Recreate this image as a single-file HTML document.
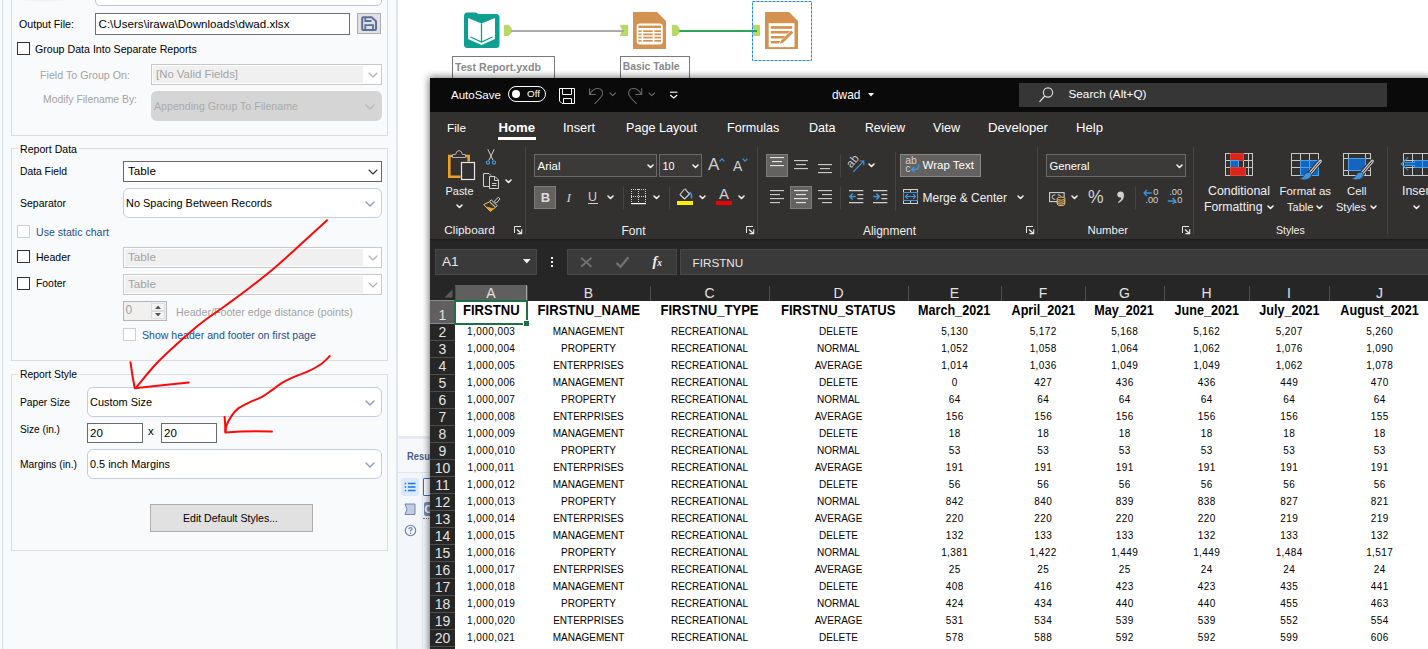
<!DOCTYPE html>
<html><head><meta charset="utf-8"><title>Excel output</title>
<style>
html,body{margin:0;padding:0}
body{width:1428px;height:649px;overflow:hidden;position:relative;background:#fff;font-family:"Liberation Sans",sans-serif}
.b{position:absolute;box-sizing:border-box}
.t{position:absolute;white-space:nowrap;margin:0;padding:0}
svg{overflow:visible}
</style></head>
<body>
<!-- left config panel -->
<div class="b" style="left:0px;top:0px;width:398px;height:649px;background:#f9fafc;"></div>
<div class="b" style="left:0px;top:0px;width:2px;height:649px;background:#fafbfd;"></div>
<div class="b" style="left:2px;top:0px;width:1px;height:649px;background:#d6dff0;"></div>
<div class="b" style="left:396px;top:0px;width:2px;height:649px;background:#dfe6f3;"></div>
<div class="b" style="left:11px;top:-20px;width:377px;height:156px;border:1px solid #dcdcdc;"></div>
<div class="b" style="left:95px;top:-25px;width:287px;height:31px;background:#fff;border:1px solid #b9c6e2;border-radius:5px;"></div>
<div class="b" style="left:14px;top:-6px;width:60px;height:8px;background:radial-gradient(ellipse at center, rgba(120,130,150,.18), rgba(120,130,150,0) 70%);"></div>
<div class="t" style="left:19.00px;top:16.00px;font-size:10.64px;line-height:16px;color:#000;">Output File:</div>
<div class="b" style="left:95px;top:13px;width:255px;height:22px;background:#fff;border:1px solid #6e6e6e;"></div>
<div class="t" style="left:98.50px;top:15.50px;font-size:11.61px;line-height:16px;color:#000;">C:\Users\irawa\Downloads\dwad.xlsx</div>
<div class="b" style="left:357px;top:13px;width:24px;height:21px;background:#e1e1e1;border:1px solid #adadad;"></div>
<svg class="b" style="left:361px;top:16px;" width="17" height="16" viewBox="0 0 17 16"><path d="M2.2 1.2 H10.6 L15 5.2 V13 Q15 14 14 14 H2.2 Q1.2 14 1.2 13 V2.2 Q1.2 1.2 2.2 1.2 Z" fill="none" stroke="#5b6f9c" stroke-width="2" stroke-linejoin="round"/><path d="M4.3 1.2 V5 H10.5" fill="none" stroke="#5b6f9c" stroke-width="1.8"/><path d="M4.3 14 V9.2 H12 V14" fill="none" stroke="#5b6f9c" stroke-width="1.8"/></svg>
<div class="b" style="left:17px;top:42px;width:13px;height:13px;background:#fff;border:1px solid #333;"></div>
<div class="t" style="left:35.00px;top:40.50px;font-size:10.64px;line-height:16px;color:#000;">Group Data Into Separate Reports</div>
<div class="t" style="left:40.00px;top:67.00px;font-size:10.68px;line-height:16px;color:#a3a3a3;">Field To Group On:</div>
<div class="b" style="left:151px;top:64px;width:231px;height:21px;background:#fff;border:1px solid #c8c8c8;"></div>
<div class="b" style="left:153px;top:66px;width:210px;height:17px;background:#f0f0f0;"></div>
<div class="t" style="left:156.00px;top:66.00px;font-size:11.38px;line-height:16px;color:#a3a3a3;">[No Valid Fields]</div>
<svg class="b" style="left:367.5px;top:72.0px;" width="10" height="6" viewBox="0 0 10 6"><path d="M1 1 L5.0 5 L9 1" fill="none" stroke="#b0b0b0" stroke-width="1.1" stroke-linecap="round" stroke-linejoin="round"/></svg>
<div class="t" style="left:43.00px;top:92.00px;font-size:10.38px;line-height:16px;color:#a3a3a3;">Modify Filename By:</div>
<div class="b" style="left:151px;top:91px;width:231px;height:30px;background:#d5d5d5;border-radius:6px;"></div>
<div class="t" style="left:154.00px;top:98.00px;font-size:10.63px;line-height:16px;color:#ababab;">Appending Group To Filename</div>
<svg class="b" style="left:365.0px;top:104.0px;" width="10" height="6" viewBox="0 0 10 6"><path d="M1 1 L5.0 5 L9 1" fill="none" stroke="#b9b9b9" stroke-width="1.3" stroke-linecap="round" stroke-linejoin="round"/></svg>
<div class="b" style="left:11px;top:148px;width:377px;height:213px;border:1px solid #dcdcdc;"></div>
<div class="b" style="left:18px;top:142px;width:61px;height:14px;background:#f9fafc;"></div>
<div class="t" style="left:20.00px;top:141.00px;font-size:10.57px;line-height:16px;color:#000;">Report Data</div>
<div class="t" style="left:20.00px;top:163.50px;font-size:10.31px;line-height:16px;color:#000;">Data Field</div>
<div class="b" style="left:123px;top:161px;width:259px;height:21px;background:#fff;border:1px solid #666;"></div>
<div class="t" style="left:128.00px;top:162.50px;font-size:11.71px;line-height:16px;color:#000;">Table</div>
<svg class="b" style="left:367.5px;top:169.0px;" width="10" height="6" viewBox="0 0 10 6"><path d="M1 1 L5.0 5 L9 1" fill="none" stroke="#333" stroke-width="1.1" stroke-linecap="round" stroke-linejoin="round"/></svg>
<div class="t" style="left:20.00px;top:195.50px;font-size:10.47px;line-height:16px;color:#000;">Separator</div>
<div class="b" style="left:123px;top:188px;width:259px;height:30px;background:#fff;border:1px solid #c2cde5;border-radius:6px;"></div>
<div class="t" style="left:126.00px;top:194.50px;font-size:10.94px;line-height:16px;color:#000;">No Spacing Between Records</div>
<svg class="b" style="left:365.0px;top:201.0px;" width="10" height="6" viewBox="0 0 10 6"><path d="M1 1 L5.0 5 L9 1" fill="none" stroke="#8c9bc0" stroke-width="1.4" stroke-linecap="round" stroke-linejoin="round"/></svg>
<div class="b" style="left:17px;top:225px;width:13px;height:13px;background:#fff;border:1px solid #cfcfcf;"></div>
<div class="t" style="left:36.00px;top:223.50px;font-size:10.59px;line-height:16px;color:#234f93;">Use static chart</div>
<div class="b" style="left:17px;top:250px;width:13px;height:13px;background:#fff;border:1px solid #333;"></div>
<div class="t" style="left:36.00px;top:249.00px;font-size:10.52px;line-height:16px;color:#000;">Header</div>
<div class="b" style="left:123px;top:247px;width:259px;height:21px;background:#fff;border:1px solid #c8c8c8;"></div>
<div class="b" style="left:125px;top:249px;width:238px;height:17px;background:#f0f0f0;"></div>
<div class="t" style="left:128.00px;top:249.00px;font-size:11.71px;line-height:16px;color:#a3a3a3;">Table</div>
<svg class="b" style="left:367.5px;top:255.0px;" width="10" height="6" viewBox="0 0 10 6"><path d="M1 1 L5.0 5 L9 1" fill="none" stroke="#b0b0b0" stroke-width="1.1" stroke-linecap="round" stroke-linejoin="round"/></svg>
<div class="b" style="left:17px;top:277px;width:13px;height:13px;background:#fff;border:1px solid #333;"></div>
<div class="t" style="left:36.00px;top:276.00px;font-size:10.38px;line-height:16px;color:#000;">Footer</div>
<div class="b" style="left:123px;top:274px;width:259px;height:21px;background:#fff;border:1px solid #c8c8c8;"></div>
<div class="b" style="left:125px;top:276px;width:238px;height:17px;background:#f0f0f0;"></div>
<div class="t" style="left:128.00px;top:276.00px;font-size:11.71px;line-height:16px;color:#a3a3a3;">Table</div>
<svg class="b" style="left:367.5px;top:282.0px;" width="10" height="6" viewBox="0 0 10 6"><path d="M1 1 L5.0 5 L9 1" fill="none" stroke="#b0b0b0" stroke-width="1.1" stroke-linecap="round" stroke-linejoin="round"/></svg>
<div class="b" style="left:123px;top:301px;width:44px;height:20px;background:#f0f0f0;border:1px solid #b5b5b5;"></div>
<div class="t" style="left:125.50px;top:302.00px;font-size:12.00px;line-height:16px;color:#a3a3a3;">0</div>
<div class="b" style="left:151px;top:303px;width:14px;height:8px;background:#f4f4f4;border:1px solid #dcdcdc;"></div>
<div class="b" style="left:151px;top:311px;width:14px;height:8px;background:#f4f4f4;border:1px solid #dcdcdc;"></div>
<svg class="b" style="left:154px;top:304px;" width="8" height="6" viewBox="0 0 8 6"><path d="M1 5 L4 1.5 L7 5 Z" fill="#555"/></svg>
<svg class="b" style="left:154px;top:312px;" width="8" height="6" viewBox="0 0 8 6"><path d="M1 1 L4 4.5 L7 1 Z" fill="#555"/></svg>
<div class="t" style="left:176.00px;top:304.00px;font-size:10.68px;line-height:16px;color:#a3a3a3;">Header/Footer edge distance (points)</div>
<div class="b" style="left:123px;top:328px;width:13px;height:13px;background:#fff;border:1px solid #cfcfcf;"></div>
<div class="t" style="left:142.00px;top:327.00px;font-size:10.57px;line-height:16px;color:#234f93;">Show header and footer on first page</div>
<div class="b" style="left:11px;top:374px;width:377px;height:177px;border:1px solid #dcdcdc;"></div>
<div class="b" style="left:18px;top:368px;width:61px;height:14px;background:#f9fafc;"></div>
<div class="t" style="left:20.00px;top:367.00px;font-size:10.36px;line-height:16px;color:#000;">Report Style</div>
<div class="t" style="left:20.00px;top:395.00px;font-size:10.22px;line-height:16px;color:#000;">Paper Size</div>
<div class="b" style="left:87px;top:387px;width:295px;height:30px;background:#fff;border:1px solid #c2cde5;border-radius:6px;"></div>
<div class="t" style="left:90.00px;top:394.00px;font-size:10.94px;line-height:16px;color:#000;">Custom Size</div>
<svg class="b" style="left:365.0px;top:400.0px;" width="10" height="6" viewBox="0 0 10 6"><path d="M1 1 L5.0 5 L9 1" fill="none" stroke="#8c9bc0" stroke-width="1.4" stroke-linecap="round" stroke-linejoin="round"/></svg>
<div class="t" style="left:20.00px;top:422.00px;font-size:10.14px;line-height:16px;color:#000;">Size (in.)</div>
<div class="b" style="left:87px;top:423px;width:56px;height:20px;background:#fff;border:1px solid #6a6a6a;"></div>
<div class="t" style="left:90.00px;top:425.00px;font-size:11.50px;line-height:16px;color:#000;">20</div>
<div class="t" style="left:148.00px;top:423.00px;font-size:11.50px;line-height:16px;color:#000;">x</div>
<div class="b" style="left:161px;top:423px;width:56px;height:20px;background:#fff;border:1px solid #6a6a6a;"></div>
<div class="t" style="left:164.00px;top:425.00px;font-size:11.50px;line-height:16px;color:#000;">20</div>
<div class="t" style="left:20.00px;top:457.00px;font-size:10.26px;line-height:16px;color:#000;">Margins (in.)</div>
<div class="b" style="left:87px;top:449px;width:295px;height:30px;background:#fff;border:1px solid #c2cde5;border-radius:6px;"></div>
<div class="t" style="left:90.00px;top:456.00px;font-size:10.90px;line-height:16px;color:#000;">0.5 inch Margins</div>
<svg class="b" style="left:365.0px;top:462.0px;" width="10" height="6" viewBox="0 0 10 6"><path d="M1 1 L5.0 5 L9 1" fill="none" stroke="#8c9bc0" stroke-width="1.4" stroke-linecap="round" stroke-linejoin="round"/></svg>
<div class="b" style="left:150px;top:504px;width:163px;height:28px;background:#e1e1e1;border:1px solid #adadad;"></div>
<div class="t" style="left:183.00px;top:510.00px;font-size:10.55px;line-height:16px;color:#000;">Edit Default Styles...</div>
<!-- canvas -->
<div class="b" style="left:398px;top:436px;width:40px;height:3px;background:#e6ecf6;"></div>
<div class="b" style="left:398px;top:439px;width:40px;height:210px;background:#f3f6fb;"></div>
<div class="b" style="left:398px;top:439px;width:40px;height:34px;background:#f6f8fc;"></div>
<div class="b" style="left:398px;top:472px;width:40px;height:1px;background:#dfe6f2;"></div>
<div class="t" style="left:407.30px;top:448.30px;font-size:11.40px;line-height:16px;color:#4a5e8c;font-weight:700;transform:scaleX(0.82);transform-origin:0 50%;">Resu</div>
<div class="b" style="left:401px;top:478px;width:18px;height:18px;background:#dbe9fb;border-radius:3px;"></div>
<svg class="b" style="left:404px;top:481px;" width="12" height="12" viewBox="0 0 12 12"><g stroke="#1a73e8" stroke-width="1.4" fill="none"><path d="M4 2.5H11.5M4 6H11.5M4 9.5H11.5"/></g><g fill="#1a73e8"><rect x="0.7" y="1.8" width="1.5" height="1.5"/><rect x="0.7" y="5.3" width="1.5" height="1.5"/><rect x="0.7" y="8.8" width="1.5" height="1.5"/></g></svg>
<svg class="b" style="left:404px;top:503px;" width="12" height="13" viewBox="0 0 12 13"><path d="M1 1 H11 V11.5 H1 L3 6.2 Z" fill="#c3cde2" stroke="#7083ad" stroke-width="1"/></svg>
<svg class="b" style="left:404px;top:524px;" width="13" height="13" viewBox="0 0 13 13"><circle cx="6.5" cy="6.5" r="5.2" fill="none" stroke="#6b7fa8" stroke-width="1.1"/><path d="M4.8 5.2 Q4.9 3.6 6.5 3.6 Q8.1 3.6 8.1 5 Q8.1 5.9 6.5 6.6 V7.6" fill="none" stroke="#6b7fa8" stroke-width="1.1"/><circle cx="6.5" cy="9.2" r="0.7" fill="#6b7fa8"/></svg>
<div class="b" style="left:422px;top:473px;width:1px;height:176px;background:#e3e9f3;"></div>
<div class="b" style="left:423px;top:478px;width:10px;height:18px;background:#fff;border:1px solid #2a73d8;border-radius:1px;"></div>
<div class="b" style="left:424px;top:502px;width:8px;height:14px;background:#7d8db0;border-radius:2px;"></div>
<div class="t" style="left:424.50px;top:501.00px;font-size:11.00px;line-height:16px;color:#fff;font-weight:700;">C</div>
<div class="b" style="left:423px;top:518px;width:8px;height:1px;border-top:1px dotted #777;"></div>
<div class="b" style="left:509px;top:30px;width:112px;height:2px;background:#ababab;"></div>
<div class="b" style="left:677px;top:30px;width:79.5px;height:2px;background:#2ea651;"></div>
<svg class="b" style="left:463px;top:11px;" width="38" height="39" viewBox="0 0 38 39"><path d="M1 5 Q1 1.5 4.5 1.5 H12.5 Q14.5 1.5 15 3 H33 Q36.5 3 36.5 6.5 V33.5 Q36.5 37 33 37 H4.5 Q1 37 1 33.5 Z" fill="#0d9f8f"/><path d="M5 7 L18.5 12.5 L32 7 V28 L18.5 34 L5 28 Z" fill="#fff"/><path d="M18.5 12.5 V31" stroke="#0d9f8f" stroke-width="1.3" fill="none"/><path d="M7.5 26 L18.5 31 L29.5 26" stroke="#0d9f8f" stroke-width="1.3" fill="none"/></svg>
<svg class="b" style="left:503.7px;top:25px;" width="8" height="11" viewBox="0 0 8 11"><path d="M0.3 0.3 H4.6 L7.2 3.4 V7.4 L4.6 10.5 H0.3 Z" fill="#b9da60" stroke="#a3c653" stroke-width="0.6"/></svg>
<svg class="b" style="left:620.2px;top:25px;" width="8" height="11" viewBox="0 0 8 11"><path d="M0.3 0.3 H7.7 V10.5 H0.3 L2.6 5.4 Z" fill="#b9da60" stroke="#a3c653" stroke-width="0.6"/></svg>
<svg class="b" style="left:671.7px;top:25px;" width="8" height="11" viewBox="0 0 8 11"><path d="M0.3 0.3 H4.6 L7.2 3.4 V7.4 L4.6 10.5 H0.3 Z" fill="#b9da60" stroke="#a3c653" stroke-width="0.6"/></svg>
<svg class="b" style="left:752.3px;top:25px;" width="8" height="11" viewBox="0 0 8 11"><path d="M0.3 0.3 H7.7 V10.5 H0.3 L2.6 5.4 Z" fill="#b9da60" stroke="#a3c653" stroke-width="0.6"/></svg>
<div class="b" style="left:620px;top:30px;width:3.5px;height:2px;background:#ababab;"></div>
<div class="b" style="left:752px;top:30px;width:4.5px;height:2px;background:#2ea651;"></div>
<svg class="b" style="left:633px;top:12px;" width="33" height="37" viewBox="0 0 33 37"><path d="M0 0 H24 L33 9 V37 H0 Z" fill="#d3924f"/><rect x="3.7" y="11.6" width="26.1" height="20.8" rx="3" fill="#fff"/><g fill="#d3924f"><rect x="5.4" y="13.6" width="22.6" height="2.4"/><rect x="5.4" y="18.3" width="3.1" height="1.7"/><rect x="10.2" y="18.3" width="9.5" height="1.7"/><rect x="21.4" y="18.3" width="6.6" height="1.7"/><rect x="5.4" y="21.5" width="3.1" height="1.7"/><rect x="10.2" y="21.5" width="9.5" height="1.7"/><rect x="21.4" y="21.5" width="6.6" height="1.7"/><rect x="5.4" y="24.7" width="3.1" height="1.7"/><rect x="10.2" y="24.7" width="9.5" height="1.7"/><rect x="21.4" y="24.7" width="6.6" height="1.7"/><rect x="5.4" y="28" width="3.1" height="1.7"/><rect x="10.2" y="28" width="9.5" height="1.7"/><rect x="21.4" y="28" width="6.6" height="1.7"/></g></svg>
<svg class="b" style="left:765px;top:12px;" width="33" height="37" viewBox="0 0 33 37"><path d="M0 0 H24 L33 9 V37 H0 Z" fill="#d3924f"/><rect x="3.7" y="11.2" width="25.8" height="23.9" fill="#fff"/><g fill="#d3924f"><rect x="5.8" y="14.1" width="21.4" height="2.7"/><path d="M5.8 19 H25 L22.5 21.6 H5.8 Z"/><path d="M5.8 24 H20.2 L17.8 26.6 H5.8 Z"/><path d="M5.8 28.9 H15.6 L13.6 31.5 H5.8 Z"/><path d="M26.2 18.6 L28.3 20.6 L18.4 30.6 L14.6 31.9 L16.2 28.4 Z"/></g></svg>
<svg class="b" style="left:752px;top:1px;" width="60" height="60" viewBox="0 0 60 60"><rect x="0.5" y="0.5" width="59" height="59" fill="none" stroke="#2585e6" stroke-width="1" stroke-dasharray="3 1"/></svg>
<div class="b" style="left:452px;top:56px;width:103px;height:24px;background:#fff;border:1px solid #7a7a7a;"></div>
<div class="t" style="left:455.00px;top:59.20px;font-size:10.63px;line-height:16px;color:#8a8a8a;font-weight:700;">Test Report.yxdb</div>
<div class="b" style="left:620px;top:56px;width:70px;height:24px;background:#fff;border:1px solid #7a7a7a;"></div>
<div class="t" style="left:622.70px;top:59.20px;font-size:10.39px;line-height:16px;color:#8a8a8a;font-weight:700;">Basic Table</div>
<!-- excel ribbon -->
<div class="b" style="left:430px;top:78px;width:1000px;height:575px;background:#fff;box-shadow:0 0 7px 1px rgba(0,0,0,.55);"></div>
<div class="b" style="left:430px;top:78px;width:998px;height:34px;background:#0a0a0a;"></div>
<div class="b" style="left:430px;top:112px;width:998px;height:127px;background:#323130;"></div>
<div class="b" style="left:430px;top:239px;width:998px;height:46px;background:#262626;"></div>
<div class="b" style="left:430px;top:239px;width:998px;height:2px;background:linear-gradient(#1a1a1a,#262626);"></div>
<div class="t" style="left:451.00px;top:87.00px;font-size:11.53px;line-height:16px;color:#fff;">AutoSave</div>
<div class="b" style="left:508px;top:86px;width:38px;height:16px;border:1px solid #fff;border-radius:8px;"></div>
<div class="b" style="left:512px;top:90px;width:8px;height:8px;background:#fff;border-radius:4px;"></div>
<div class="t" style="left:527.00px;top:86.00px;font-size:9.88px;line-height:16px;color:#fff;">Off</div>
<svg class="b" style="left:559px;top:88px;" width="17" height="17" viewBox="0 0 17 17"><path d="M0.5 0.5 H15.5 V15.5 H3 L0.5 13 Z" fill="none" stroke="#fff" stroke-width="1"/><path d="M3.5 0.5 V6.5 H12.5 V0.5" fill="none" stroke="#fff" stroke-width="1"/><path d="M4.5 15.5 V10.5 H12.5 V15.5" fill="none" stroke="#fff" stroke-width="1"/></svg>
<svg class="b" style="left:588px;top:87px;" width="16" height="18" viewBox="0 0 16 18"><path d="M1.5 1.2 V7.5 H7.8" fill="none" stroke="#6a6a6a" stroke-width="1.1"/><path d="M2 7 C4 3.2 7 1.5 10 1.5 C13 1.5 15 4 14.5 7 C14 10 10.5 13 6.5 16.8" fill="none" stroke="#6a6a6a" stroke-width="1.1"/></svg>
<svg class="b" style="left:608.75px;top:92.0px;" width="7.5" height="4.6" viewBox="0 0 7.5 4.6"><path d="M1 1 L3.75 3.6 L6.5 1" fill="none" stroke="#6a6a6a" stroke-width="1.1" stroke-linecap="round" stroke-linejoin="round"/></svg>
<svg class="b" style="left:627px;top:87px;" width="16" height="18" viewBox="0 0 16 18"><path d="M14.7 1.2 V7.5 H8.4" fill="none" stroke="#6a6a6a" stroke-width="1.1"/><path d="M14.2 7 C12.2 3.2 9.2 1.5 6.2 1.5 C3.2 1.5 1.2 4 1.7 7 C2.2 10 5.7 13 9.7 16.8" fill="none" stroke="#6a6a6a" stroke-width="1.1"/></svg>
<svg class="b" style="left:647.85px;top:92.0px;" width="7.5" height="4.6" viewBox="0 0 7.5 4.6"><path d="M1 1 L3.75 3.6 L6.5 1" fill="none" stroke="#6a6a6a" stroke-width="1.1" stroke-linecap="round" stroke-linejoin="round"/></svg>
<svg class="b" style="left:669px;top:91px;" width="10" height="8" viewBox="0 0 10 8"><path d="M1 1.2 H8.4" stroke="#fff" stroke-width="1.1"/><path d="M1.2 4 L4.7 7 L8.2 4" fill="none" stroke="#fff" stroke-width="1.2"/></svg>
<div class="t" style="left:832.00px;top:86.50px;font-size:11.92px;line-height:16px;color:#fff;">dwad</div>
<svg class="b" style="left:868px;top:93px;" width="6" height="4" viewBox="0 0 6 4"><path d="M0 0 H6 L3 3.5 Z" fill="#fff"/></svg>
<div class="b" style="left:1019px;top:83px;width:368px;height:24px;background:#363636;"></div>
<svg class="b" style="left:1038px;top:86px;" width="16" height="18" viewBox="0 0 16 18"><circle cx="10" cy="6.5" r="4.6" fill="none" stroke="#e0e0e0" stroke-width="1.1"/><path d="M6.8 10 L1.5 15.8" stroke="#e0e0e0" stroke-width="1.2"/></svg>
<div class="t" style="left:1068.50px;top:86.00px;font-size:11.74px;line-height:16px;color:#fff;">Search (Alt+Q)</div>
<div class="t" style="left:447.00px;top:118.50px;font-size:11.79px;line-height:18px;color:#fff;">File</div>
<div class="t" style="left:563.00px;top:118.50px;font-size:12.79px;line-height:18px;color:#fff;">Insert</div>
<div class="t" style="left:626.00px;top:118.50px;font-size:12.64px;line-height:18px;color:#fff;">Page Layout</div>
<div class="t" style="left:727.00px;top:118.50px;font-size:12.57px;line-height:18px;color:#fff;">Formulas</div>
<div class="t" style="left:809.00px;top:118.50px;font-size:12.59px;line-height:18px;color:#fff;">Data</div>
<div class="t" style="left:865.00px;top:118.50px;font-size:12.20px;line-height:18px;color:#fff;">Review</div>
<div class="t" style="left:933.00px;top:118.50px;font-size:12.56px;line-height:18px;color:#fff;">View</div>
<div class="t" style="left:988.00px;top:118.50px;font-size:13.16px;line-height:18px;color:#fff;">Developer</div>
<div class="t" style="left:1076.00px;top:118.50px;font-size:13.13px;line-height:18px;color:#fff;">Help</div>
<div class="t" style="left:498.50px;top:118.50px;font-size:13.14px;line-height:18px;color:#fff;font-weight:700;">Home</div>
<div class="b" style="left:498px;top:137px;width:38px;height:3px;background:#fff;"></div>
<div class="b" style="left:525px;top:147px;width:1px;height:87px;background:#484644;"></div>
<div class="b" style="left:757px;top:147px;width:1px;height:87px;background:#484644;"></div>
<div class="b" style="left:1037px;top:147px;width:1px;height:87px;background:#484644;"></div>
<div class="b" style="left:1193px;top:147px;width:1px;height:87px;background:#484644;"></div>
<div class="b" style="left:1387px;top:147px;width:1px;height:87px;background:#484644;"></div>
<div class="b" style="left:623px;top:187px;width:1px;height:22px;background:#484644;"></div>
<div class="b" style="left:669px;top:187px;width:1px;height:22px;background:#484644;"></div>
<div class="b" style="left:840px;top:155px;width:1px;height:22px;background:#484644;"></div>
<div class="b" style="left:840px;top:187px;width:1px;height:22px;background:#484644;"></div>
<div class="b" style="left:895px;top:152px;width:1px;height:59px;background:#484644;"></div>
<div class="b" style="left:1135px;top:187px;width:1px;height:22px;background:#484644;"></div>
<svg class="b" style="left:447px;top:149px;" width="29" height="31" viewBox="0 0 29 31"><path d="M6 7 H2.3 V27.7 H13.5" fill="none" stroke="#eba02e" stroke-width="2.6"/><path d="M18 7 H21.7 V12.5" fill="none" stroke="#eba02e" stroke-width="2.6"/><path d="M5.5 8.5 V5.5 H8.6 Q9.2 1.6 12 1.6 Q14.8 1.6 15.4 5.5 H18.5 V8.5 Z" fill="#323130" stroke="#b0b0b0" stroke-width="1"/><rect x="14.5" y="13.5" width="13" height="17" fill="#323130" stroke="#e6e6e6" stroke-width="1.2"/></svg>
<div class="t" style="left:445.50px;top:183.00px;font-size:10.95px;line-height:16px;color:#f0f0f0;">Paste</div>
<svg class="b" style="left:455.5px;top:203.75px;" width="7" height="4.5" viewBox="0 0 7 4.5"><path d="M1 1 L3.5 3.5 L6 1" fill="none" stroke="#f0f0f0" stroke-width="1.6" stroke-linecap="round" stroke-linejoin="round"/></svg>
<svg class="b" style="left:485px;top:148px;" width="12" height="18" viewBox="0 0 12 18"><path d="M2.8 1.2 L8.2 12.6 M9.2 1.2 L3.8 12.6" stroke="#d0d0d0" stroke-width="1" fill="none"/><circle cx="3" cy="14.6" r="1.6" fill="none" stroke="#3a96dd" stroke-width="1.2"/><circle cx="9" cy="14.6" r="1.6" fill="none" stroke="#3a96dd" stroke-width="1.2"/></svg>
<svg class="b" style="left:482px;top:172px;" width="18" height="18" viewBox="0 0 18 18"><path d="M7.5 14.5 H1.5 V1.5 H7 L9.3 3.8" fill="none" stroke="#d0d0d0" stroke-width="1"/><path d="M7.5 4.5 H13 L16.5 8 V16.5 H7.5 Z" fill="#323130" stroke="#d0d0d0" stroke-width="1"/><path d="M12.5 4.8 V8.5 H16.2" fill="none" stroke="#d0d0d0" stroke-width="1"/><path d="M10 11.5 H14.5 M10 13.5 H14.5" stroke="#d0d0d0" stroke-width="1"/></svg>
<svg class="b" style="left:505.0px;top:178.75px;" width="7" height="4.5" viewBox="0 0 7 4.5"><path d="M1 1 L3.5 3.5 L6 1" fill="none" stroke="#f0f0f0" stroke-width="1.6" stroke-linecap="round" stroke-linejoin="round"/></svg>
<svg class="b" style="left:483px;top:196px;" width="18" height="17" viewBox="0 0 18 17"><path d="M15.2 1.2 L17 3 L13 7.4 L11.2 5.6 Z" fill="#323130" stroke="#d0d0d0" stroke-width="1" stroke-linejoin="round"/><path d="M8.2 3.8 L14.2 9.6 L12.6 11.2 L6.6 5.4 Z" fill="#323130" stroke="#d0d0d0" stroke-width="1"/><path d="M6.4 5.8 L12.3 11.5 L7.3 15.4 L0.8 8.6 Z" fill="#323130" stroke="#f2c469" stroke-width="1" stroke-linejoin="round"/><path d="M3.4 10.6 L10.8 12.6 L7.3 15.4 Z" fill="#eba02e"/></svg>
<div class="t" style="left:444.30px;top:222.00px;font-size:11.80px;line-height:16px;color:#f0f0f0;">Clipboard</div>
<svg class="b" style="left:514px;top:226px;" width="9" height="9" viewBox="0 0 9 9"><path d="M0.5 7 V0.5 H7" fill="none" stroke="#e8e8e8" stroke-width="1"/><path d="M3 3.4 L7.4 7.4" fill="none" stroke="#e8e8e8" stroke-width="1.3"/><path d="M3.4 7.6 H7.7 V3.3" fill="none" stroke="#e8e8e8" stroke-width="1.1"/></svg>
<div class="b" style="left:534px;top:154px;width:123px;height:23px;background:#3b3a39;border:1px solid #6c6a68;"></div>
<div class="t" style="left:537.50px;top:158.00px;font-size:11.50px;line-height:16px;color:#fff;">Arial</div>
<svg class="b" style="left:647.0px;top:164.25px;" width="7" height="4.5" viewBox="0 0 7 4.5"><path d="M1 1 L3.5 3.5 L6 1" fill="none" stroke="#f0f0f0" stroke-width="1.6" stroke-linecap="round" stroke-linejoin="round"/></svg>
<div class="b" style="left:659px;top:154px;width:43px;height:23px;background:#3b3a39;border:1px solid #6c6a68;"></div>
<div class="t" style="left:662.50px;top:158.00px;font-size:10.79px;line-height:16px;color:#fff;">10</div>
<svg class="b" style="left:691.5px;top:164.25px;" width="7" height="4.5" viewBox="0 0 7 4.5"><path d="M1 1 L3.5 3.5 L6 1" fill="none" stroke="#f0f0f0" stroke-width="1.6" stroke-linecap="round" stroke-linejoin="round"/></svg>
<div class="t" style="left:708.00px;top:156.50px;font-size:17.00px;line-height:16px;color:#d0d0d0;">A</div>
<svg class="b" style="left:718.5px;top:158px;" width="6" height="4" viewBox="0 0 6 4"><path d="M0.6 3.4 L3 0.8 L5.4 3.4" fill="none" stroke="#3a96dd" stroke-width="1.2"/></svg>
<div class="t" style="left:733.00px;top:158.00px;font-size:14.00px;line-height:16px;color:#d0d0d0;">A</div>
<svg class="b" style="left:741.5px;top:158px;" width="6" height="4" viewBox="0 0 6 4"><path d="M0.6 0.6 L3 3.2 L5.4 0.6" fill="none" stroke="#3a96dd" stroke-width="1.2"/></svg>
<div class="b" style="left:534px;top:186px;width:22px;height:23px;background:#636261;border:1px solid #7e7c7a;"></div>
<div class="t" style="left:540.81px;top:189.50px;font-size:13.00px;line-height:16px;color:#ddd;font-weight:700;">B</div>
<div class="t" style="left:566.62px;top:189.50px;font-size:13.50px;line-height:16px;color:#d0d0d0;font-style:italic;font-family:'Liberation Serif',serif;">I</div>
<div class="t" style="left:587.99px;top:188.50px;font-size:12.50px;line-height:16px;color:#d0d0d0;">U</div>
<div class="b" style="left:588px;top:203.3px;width:9.5px;height:1px;background:#d0d0d0;"></div>
<svg class="b" style="left:607.0px;top:195.25px;" width="7" height="4.5" viewBox="0 0 7 4.5"><path d="M1 1 L3.5 3.5 L6 1" fill="none" stroke="#f0f0f0" stroke-width="1.6" stroke-linecap="round" stroke-linejoin="round"/></svg>
<svg class="b" style="left:631px;top:189px;" width="15" height="16" viewBox="0 0 15 16"><g stroke="#d0d0d0" stroke-width="1" stroke-dasharray="1 1" fill="none"><path d="M0 0.5 H15 M0 7.5 H15 M0.5 0 V14 M7.5 0 V14 M14.5 0 V14"/></g><path d="M0 14.6 H15" stroke="#fff" stroke-width="1.2"/></svg>
<svg class="b" style="left:652.5px;top:195.25px;" width="7" height="4.5" viewBox="0 0 7 4.5"><path d="M1 1 L3.5 3.5 L6 1" fill="none" stroke="#f0f0f0" stroke-width="1.6" stroke-linecap="round" stroke-linejoin="round"/></svg>
<svg class="b" style="left:679px;top:188px;" width="14" height="12" viewBox="0 0 14 12"><path d="M5.5 1 L1 6.5 L5.5 11 L10.5 6 L6.8 2.2 L6.8 0.6" fill="none" stroke="#d0d0d0" stroke-width="1.1" stroke-linejoin="round"/><path d="M10.5 4 Q13.5 6.5 12.2 10.5" fill="none" stroke="#3a96dd" stroke-width="1.6"/></svg>
<div class="b" style="left:677px;top:201px;width:16px;height:4px;background:#ffee00;"></div>
<svg class="b" style="left:699.0px;top:195.25px;" width="7" height="4.5" viewBox="0 0 7 4.5"><path d="M1 1 L3.5 3.5 L6 1" fill="none" stroke="#f0f0f0" stroke-width="1.6" stroke-linecap="round" stroke-linejoin="round"/></svg>
<div class="t" style="left:719.00px;top:186.00px;font-size:15.00px;line-height:16px;color:#d0d0d0;">A</div>
<div class="b" style="left:716px;top:201px;width:16px;height:4px;background:#f00000;"></div>
<svg class="b" style="left:738.0px;top:195.25px;" width="7" height="4.5" viewBox="0 0 7 4.5"><path d="M1 1 L3.5 3.5 L6 1" fill="none" stroke="#f0f0f0" stroke-width="1.6" stroke-linecap="round" stroke-linejoin="round"/></svg>
<div class="t" style="left:621.50px;top:222.60px;font-size:11.99px;line-height:16px;color:#f0f0f0;">Font</div>
<svg class="b" style="left:746px;top:226px;" width="9" height="9" viewBox="0 0 9 9"><path d="M0.5 7 V0.5 H7" fill="none" stroke="#e8e8e8" stroke-width="1"/><path d="M3 3.4 L7.4 7.4" fill="none" stroke="#e8e8e8" stroke-width="1.3"/><path d="M3.4 7.6 H7.7 V3.3" fill="none" stroke="#e8e8e8" stroke-width="1.1"/></svg>
<div class="b" style="left:766px;top:154px;width:22px;height:23px;background:#636261;border:1px solid #7e7c7a;"></div>
<svg class="b" style="left:770px;top:157px;" width="14" height="13" viewBox="0 0 14 13"><path d="M0.0 0.6 H14.0" stroke="#e8e8e8" stroke-width="1.1"/><path d="M2.0 4.6 H12.0" stroke="#e8e8e8" stroke-width="1.1"/><path d="M0.0 8.6 H14.0" stroke="#e8e8e8" stroke-width="1.1"/></svg>
<svg class="b" style="left:794px;top:160px;" width="14" height="13" viewBox="0 0 14 13"><path d="M0.0 0.6 H14.0" stroke="#d0d0d0" stroke-width="1.1"/><path d="M2.0 4.6 H12.0" stroke="#d0d0d0" stroke-width="1.1"/><path d="M0.0 8.6 H14.0" stroke="#d0d0d0" stroke-width="1.1"/></svg>
<svg class="b" style="left:818px;top:164px;" width="14" height="13" viewBox="0 0 14 13"><path d="M0.0 0.6 H14.0" stroke="#d0d0d0" stroke-width="1.1"/><path d="M2.0 4.6 H12.0" stroke="#d0d0d0" stroke-width="1.1"/><path d="M0.0 8.6 H14.0" stroke="#d0d0d0" stroke-width="1.1"/></svg>
<svg class="b" style="left:770px;top:190px;" width="14" height="17" viewBox="0 0 14 17"><path d="M0 0.6 H14" stroke="#d0d0d0" stroke-width="1.1"/><path d="M0 4.6 H10" stroke="#d0d0d0" stroke-width="1.1"/><path d="M0 8.6 H14" stroke="#d0d0d0" stroke-width="1.1"/><path d="M0 12.6 H10" stroke="#d0d0d0" stroke-width="1.1"/></svg>
<div class="b" style="left:790px;top:186px;width:22px;height:23px;background:#636261;border:1px solid #7e7c7a;"></div>
<svg class="b" style="left:794px;top:190px;" width="14" height="17" viewBox="0 0 14 17"><path d="M0.0 0.6 H14.0" stroke="#e8e8e8" stroke-width="1.1"/><path d="M2.0 4.6 H12.0" stroke="#e8e8e8" stroke-width="1.1"/><path d="M0.0 8.6 H14.0" stroke="#e8e8e8" stroke-width="1.1"/><path d="M2.0 12.6 H12.0" stroke="#e8e8e8" stroke-width="1.1"/></svg>
<svg class="b" style="left:818px;top:190px;" width="14" height="17" viewBox="0 0 14 17"><path d="M0 0.6 H14" stroke="#d0d0d0" stroke-width="1.1"/><path d="M4 4.6 H14" stroke="#d0d0d0" stroke-width="1.1"/><path d="M0 8.6 H14" stroke="#d0d0d0" stroke-width="1.1"/><path d="M4 12.6 H14" stroke="#d0d0d0" stroke-width="1.1"/></svg>
<div class="t" style="left:846.40px;top:152.80px;font-size:11.50px;line-height:16px;color:#c8c8c8;transform:rotate(-50deg);transform-origin:50% 50%;">ab</div>
<svg class="b" style="left:852px;top:159px;" width="14" height="14" viewBox="0 0 14 14"><path d="M1.2 12.8 L11.6 2.2 M7.6 2 H11.8 V6.2" fill="none" stroke="#3a96dd" stroke-width="1.2"/></svg>
<svg class="b" style="left:868.0px;top:163.25px;" width="7" height="4.5" viewBox="0 0 7 4.5"><path d="M1 1 L3.5 3.5 L6 1" fill="none" stroke="#f0f0f0" stroke-width="1.6" stroke-linecap="round" stroke-linejoin="round"/></svg>
<svg class="b" style="left:848.8px;top:190px;" width="15" height="14" viewBox="0 0 15 14"><path d="M0 0.6 H14.3 M0 12.6 H14.3 M8.4 4.6 H14.3 M8.4 8.6 H14.3" stroke="#d0d0d0" stroke-width="1.1"/><path d="M6.8 6.5 H0.8 M3.7 3.5 L0.8 6.5 L3.7 9.5" fill="none" stroke="#3a96dd" stroke-width="1.5"/></svg>
<svg class="b" style="left:872.8px;top:190px;" width="15" height="14" viewBox="0 0 15 14"><path d="M0 0.6 H14.3 M0 12.6 H14.3 M8.4 4.6 H14.3 M8.4 8.6 H14.3" stroke="#d0d0d0" stroke-width="1.1"/><path d="M0.3 6.5 H6.3 M3.4 3.5 L6.3 6.5 L3.4 9.5" fill="none" stroke="#3a96dd" stroke-width="1.5"/></svg>
<div class="b" style="left:900px;top:154px;width:81px;height:23px;background:#636261;border:1px solid #8a8886;"></div>
<div class="t" style="left:905.20px;top:155.10px;font-size:10.50px;line-height:11px;color:#d0d0d0;">ab</div>
<div class="t" style="left:905.20px;top:162.90px;font-size:10.50px;line-height:11px;color:#d0d0d0;">c</div>
<svg class="b" style="left:910px;top:163px;" width="10" height="10" viewBox="0 0 10 10"><path d="M8.7 1.2 Q9 6.3 5.5 6.5 H1.6 M4.4 3.6 L1.5 6.5 L4.4 9.4" fill="none" stroke="#3a96dd" stroke-width="1.3"/></svg>
<div class="t" style="left:922.50px;top:157.00px;font-size:11.53px;line-height:16px;color:#fff;">Wrap Text</div>
<svg class="b" style="left:903px;top:189px;" width="15" height="15" viewBox="0 0 15 15"><rect x="0.5" y="0.5" width="14" height="14" fill="none" stroke="#d0d0d0" stroke-width="1"/><path d="M7.5 0.5 V4 M7.5 11 V14.5" stroke="#d0d0d0" stroke-width="1"/><rect x="0.5" y="3.5" width="14" height="8" fill="#323130" stroke="#3a96dd" stroke-width="1"/><path d="M2.6 7.5 H12.4 M4.8 5.2 L2.5 7.5 L4.8 9.8 M10.2 5.2 L12.5 7.5 L10.2 9.8" fill="none" stroke="#3a96dd" stroke-width="1.2"/></svg>
<div class="t" style="left:922.50px;top:189.50px;font-size:11.97px;line-height:16px;color:#f0f0f0;">Merge &amp; Center</div>
<svg class="b" style="left:1016.5px;top:195.25px;" width="7" height="4.5" viewBox="0 0 7 4.5"><path d="M1 1 L3.5 3.5 L6 1" fill="none" stroke="#f0f0f0" stroke-width="1.6" stroke-linecap="round" stroke-linejoin="round"/></svg>
<div class="t" style="left:863.00px;top:222.60px;font-size:11.92px;line-height:16px;color:#f0f0f0;">Alignment</div>
<svg class="b" style="left:1026px;top:226px;" width="9" height="9" viewBox="0 0 9 9"><path d="M0.5 7 V0.5 H7" fill="none" stroke="#e8e8e8" stroke-width="1"/><path d="M3 3.4 L7.4 7.4" fill="none" stroke="#e8e8e8" stroke-width="1.3"/><path d="M3.4 7.6 H7.7 V3.3" fill="none" stroke="#e8e8e8" stroke-width="1.1"/></svg>
<div class="b" style="left:1046px;top:154px;width:140px;height:23px;background:#3b3a39;border:1px solid #6c6a68;"></div>
<div class="t" style="left:1049.50px;top:158.00px;font-size:11.24px;line-height:16px;color:#fff;">General</div>
<svg class="b" style="left:1175.5px;top:164.25px;" width="7" height="4.5" viewBox="0 0 7 4.5"><path d="M1 1 L3.5 3.5 L6 1" fill="none" stroke="#f0f0f0" stroke-width="1.6" stroke-linecap="round" stroke-linejoin="round"/></svg>
<svg class="b" style="left:1049px;top:191.5px;" width="18" height="15" viewBox="0 0 18 15"><rect x="0.6" y="0.6" width="14.5" height="9" fill="none" stroke="#d0d0d0" stroke-width="1.1"/><path d="M6.3 2.8 Q3 2.8 3 5.1 Q3 7.4 6.3 7.4 M8.6 2.8 Q11.8 2.8 12 4.6" fill="none" stroke="#d0d0d0" stroke-width="1"/><path d="M8.2 6.6 V12 Q8.2 13.6 12 13.6 Q15.8 13.6 15.8 12 V6.6 Z" fill="#323130" stroke="#f2c469" stroke-width="1"/><ellipse cx="12" cy="6.6" rx="3.8" ry="1.6" fill="#323130" stroke="#f2c469" stroke-width="1"/><path d="M8.2 8.6 Q8.2 10.2 12 10.2 Q15.8 10.2 15.8 8.6 M8.2 10.4 Q8.2 12 12 12 Q15.8 12 15.8 10.4" fill="none" stroke="#f2c469" stroke-width="0.9"/></svg>
<svg class="b" style="left:1071.0px;top:195.25px;" width="7" height="4.5" viewBox="0 0 7 4.5"><path d="M1 1 L3.5 3.5 L6 1" fill="none" stroke="#f0f0f0" stroke-width="1.6" stroke-linecap="round" stroke-linejoin="round"/></svg>
<div class="t" style="left:1088.00px;top:189.00px;font-size:17.50px;line-height:16px;color:#d0d0d0;">%</div>
<svg class="b" style="left:1116px;top:191px;" width="9" height="13" viewBox="0 0 9 13"><path d="M4.5 0.5 Q8 0.5 8 4 Q8 9.5 2.5 12 L2 11 Q5.5 8.5 5.2 6.5 Q1.2 7 1.2 3.5 Q1.5 0.5 4.5 0.5 Z" fill="#d0d0d0"/></svg>
<svg class="b" style="left:1143px;top:188.5px;" width="10" height="8" viewBox="0 0 10 8"><path d="M8.6 4 H1 M4 1 L1 4 L4 7" fill="none" stroke="#3a96dd" stroke-width="1.3"/></svg>
<div class="t" style="left:1153.30px;top:187.30px;font-size:9.30px;line-height:10px;color:#d0d0d0;">0</div>
<div class="t" style="left:1145.30px;top:195.40px;font-size:9.30px;line-height:10px;color:#d0d0d0;">.00</div>
<div class="t" style="left:1169.20px;top:187.30px;font-size:9.30px;line-height:10px;color:#d0d0d0;">.00</div>
<svg class="b" style="left:1166.5px;top:196.5px;" width="10" height="8" viewBox="0 0 10 8"><path d="M0.8 4 H8.6 M5.6 1 L8.6 4 L5.6 7" fill="none" stroke="#3a96dd" stroke-width="1.3"/></svg>
<div class="t" style="left:1174.60px;top:195.40px;font-size:9.30px;line-height:10px;color:#d0d0d0;">.0</div>
<div class="t" style="left:1087.50px;top:222.00px;font-size:11.41px;line-height:16px;color:#f0f0f0;">Number</div>
<svg class="b" style="left:1182px;top:226px;" width="9" height="9" viewBox="0 0 9 9"><path d="M0.5 7 V0.5 H7" fill="none" stroke="#e8e8e8" stroke-width="1"/><path d="M3 3.4 L7.4 7.4" fill="none" stroke="#e8e8e8" stroke-width="1.3"/><path d="M3.4 7.6 H7.7 V3.3" fill="none" stroke="#e8e8e8" stroke-width="1.1"/></svg>
<svg class="b" style="left:1225px;top:153px;" width="28" height="23" viewBox="0 0 28 23"><rect x="0.5" y="0.5" width="27" height="22" fill="none" stroke="#c8c8c8" stroke-width="1"/><path d="M5.5 0.5 V22.5" stroke="#c8c8c8" stroke-width="1"/><path d="M18.5 0.5 V22.5" stroke="#c8c8c8" stroke-width="1"/><path d="M23.5 0.5 V22.5" stroke="#c8c8c8" stroke-width="1"/><path d="M0.5 7.5 H27.5" stroke="#c8c8c8" stroke-width="1"/><path d="M0.5 14.5 H27.5" stroke="#c8c8c8" stroke-width="1"/><rect x="5.5" y="0.5" width="13" height="7" fill="#d9261c" stroke="#ee3a30" stroke-width="1"/><rect x="5.5" y="7.5" width="8" height="7" fill="#1565c0" stroke="#4aa3ea" stroke-width="1"/><rect x="5.5" y="14.5" width="15" height="8" fill="#d9261c" stroke="#ee3a30" stroke-width="1"/></svg>
<svg class="b" style="left:1291px;top:153px;" width="32" height="28" viewBox="0 0 32 28"><rect x="0.5" y="0.5" width="27" height="22" fill="none" stroke="#c8c8c8" stroke-width="1"/><path d="M9.5 0.5 V22.5" stroke="#c8c8c8" stroke-width="1"/><path d="M18.5 0.5 V22.5" stroke="#c8c8c8" stroke-width="1"/><path d="M0.5 7.5 H27.5" stroke="#c8c8c8" stroke-width="1"/><path d="M0.5 14.5 H27.5" stroke="#c8c8c8" stroke-width="1"/><rect x="9.5" y="7.5" width="18" height="15" fill="#1565c0" stroke="#4aa3ea" stroke-width="1"/><path d="M18.5 7.5 V22.5 M9.5 14.5 H27.5" stroke="#4aa3ea" stroke-width="1" fill="none"/><g transform="translate(0,0)"><path d="M29.3 8.3 L17.5 22" stroke="#323130" stroke-width="5.2" stroke-linecap="round"/><path d="M29.3 8.3 L18.5 21" stroke="#c8c8c8" stroke-width="3.2" stroke-linecap="round"/><path d="M29 8.7 L19.2 20.2" stroke="#323130" stroke-width="1" stroke-linecap="round"/><path d="M18.6 19.4 Q14.6 18.6 13.2 22.2 Q12 25 7.8 25.6 Q12.5 28 16.8 26.2 Q20.6 24.4 20.8 21.4 Z" fill="#3a96dd" stroke="#323130" stroke-width="0.7"/></g></svg>
<svg class="b" style="left:1343px;top:153px;" width="32" height="28" viewBox="0 0 32 28"><rect x="0.5" y="0.5" width="27" height="22" fill="none" stroke="#c8c8c8" stroke-width="1"/><path d="M5.5 0.5 V22.5" stroke="#c8c8c8" stroke-width="1"/><path d="M22.5 0.5 V22.5" stroke="#c8c8c8" stroke-width="1"/><path d="M0.5 5.5 H27.5" stroke="#c8c8c8" stroke-width="1"/><path d="M0.5 17.5 H27.5" stroke="#c8c8c8" stroke-width="1"/><rect x="5.5" y="5.5" width="17" height="12" fill="#1565c0" stroke="#4aa3ea" stroke-width="1"/><g transform="translate(0,0)"><path d="M29.3 8.3 L17.5 22" stroke="#323130" stroke-width="5.2" stroke-linecap="round"/><path d="M29.3 8.3 L18.5 21" stroke="#c8c8c8" stroke-width="3.2" stroke-linecap="round"/><path d="M29 8.7 L19.2 20.2" stroke="#323130" stroke-width="1" stroke-linecap="round"/><path d="M18.6 19.4 Q14.6 18.6 13.2 22.2 Q12 25 7.8 25.6 Q12.5 28 16.8 26.2 Q20.6 24.4 20.8 21.4 Z" fill="#3a96dd" stroke="#323130" stroke-width="0.7"/></g></svg>
<div class="t" style="left:1208.00px;top:183.00px;font-size:12.39px;line-height:16px;color:#f0f0f0;">Conditional</div>
<div class="t" style="left:1204.00px;top:199.00px;font-size:12.24px;line-height:16px;color:#f0f0f0;">Formatting</div>
<svg class="b" style="left:1266.5px;top:204.75px;" width="7" height="4.5" viewBox="0 0 7 4.5"><path d="M1 1 L3.5 3.5 L6 1" fill="none" stroke="#f0f0f0" stroke-width="1.6" stroke-linecap="round" stroke-linejoin="round"/></svg>
<div class="t" style="left:1279.50px;top:183.00px;font-size:11.44px;line-height:16px;color:#f0f0f0;">Format as</div>
<div class="t" style="left:1287.00px;top:199.00px;font-size:11.08px;line-height:16px;color:#f0f0f0;">Table</div>
<svg class="b" style="left:1316.0px;top:204.75px;" width="7" height="4.5" viewBox="0 0 7 4.5"><path d="M1 1 L3.5 3.5 L6 1" fill="none" stroke="#f0f0f0" stroke-width="1.6" stroke-linecap="round" stroke-linejoin="round"/></svg>
<div class="t" style="left:1347.00px;top:183.00px;font-size:11.32px;line-height:16px;color:#f0f0f0;">Cell</div>
<div class="t" style="left:1336.00px;top:199.00px;font-size:11.02px;line-height:16px;color:#f0f0f0;">Styles</div>
<svg class="b" style="left:1369.5px;top:204.75px;" width="7" height="4.5" viewBox="0 0 7 4.5"><path d="M1 1 L3.5 3.5 L6 1" fill="none" stroke="#f0f0f0" stroke-width="1.6" stroke-linecap="round" stroke-linejoin="round"/></svg>
<div class="t" style="left:1276.00px;top:222.00px;font-size:10.54px;line-height:16px;color:#f0f0f0;">Styles</div>
<svg class="b" style="left:1400px;top:153px;overflow:hidden;" width="28" height="23" viewBox="0 0 28 23"><path d="M33 0.5 H3.5 V22.5 H33" fill="none" stroke="#c8c8c8" stroke-width="1"/><path d="M12.5 0.5 V22.5" stroke="#c8c8c8" stroke-width="1"/><path d="M22.5 0.5 V22.5" stroke="#c8c8c8" stroke-width="1"/><path d="M3.5 7.5 H32.5" stroke="#c8c8c8" stroke-width="1"/><path d="M3.5 14.5 H32.5" stroke="#c8c8c8" stroke-width="1"/><rect x="14.5" y="7.5" width="16" height="7" fill="#1565c0" stroke="#4aa3ea" stroke-width="1"/><path d="M22.5 7.5 V14.5" stroke="#4aa3ea" stroke-width="1"/><rect x="5" y="9.5" width="10" height="3" fill="#1565c0"/><path d="M15 9.4 H4.5 M15 12.4 H4.5 M8.2 4.4 L1.4 10.9 L8.2 17.4" fill="none" stroke="#3a96dd" stroke-width="1.2"/></svg>
<div class="t" style="left:1402.00px;top:183.00px;font-size:12.39px;line-height:16px;color:#f0f0f0;">Insert</div>
<svg class="b" style="left:1412.5px;top:204.75px;" width="7" height="4.5" viewBox="0 0 7 4.5"><path d="M1 1 L3.5 3.5 L6 1" fill="none" stroke="#f0f0f0" stroke-width="1.6" stroke-linecap="round" stroke-linejoin="round"/></svg>
<!-- excel grid -->
<div class="b" style="left:435px;top:249px;width:102px;height:26px;background:#3a3a3a;border:1px solid #484848;"></div>
<div class="t" style="left:442.00px;top:254.40px;font-size:13.60px;line-height:16px;color:#e6e6e6;">A1</div>
<svg class="b" style="left:523px;top:258.5px;" width="8" height="5" viewBox="0 0 8 5"><path d="M0 0 H7.6 L3.8 4.4 Z" fill="#f0f0f0"/></svg>
<div class="b" style="left:551px;top:257px;width:2px;height:2px;background:#f0f0f0;"></div>
<div class="b" style="left:551px;top:261px;width:2px;height:2px;background:#f0f0f0;"></div>
<div class="b" style="left:551px;top:265px;width:2px;height:2px;background:#f0f0f0;"></div>
<div class="b" style="left:567px;top:249px;width:110px;height:26px;background:#3a3a3a;border:1px solid #484848;"></div>
<svg class="b" style="left:580px;top:257px;" width="13" height="11" viewBox="0 0 13 11"><path d="M1 0.8 L11.5 9.8 M11.5 0.8 L1 9.8" stroke="#707070" stroke-width="1.8"/></svg>
<svg class="b" style="left:615px;top:256px;" width="15" height="13" viewBox="0 0 15 13"><path d="M1.5 6.8 L5.6 10.8 L13.4 1.2" fill="none" stroke="#707070" stroke-width="2.4"/></svg>
<div class="t" style="left:652.50px;top:252.50px;font-size:14.50px;line-height:16px;color:#f0f0f0;font-weight:700;font-style:italic;font-family:'Liberation Serif',serif;">f</div>
<div class="t" style="left:657.20px;top:255.20px;font-size:9.50px;line-height:16px;color:#f0f0f0;font-weight:700;font-style:italic;font-family:'Liberation Serif',serif;">x</div>
<div class="b" style="left:680px;top:249px;width:750px;height:26px;background:#3a3a3a;border:1px solid #484848;"></div>
<div class="t" style="left:692.50px;top:254.50px;font-size:11.72px;line-height:16px;color:#e6e6e6;">FIRSTNU</div>
<div class="b" style="left:430px;top:285px;width:998px;height:16px;background:#262626;"></div>
<svg class="b" style="left:444px;top:289px;" width="9" height="9" viewBox="0 0 9 9"><path d="M8.5 0.5 V8.5 H0.5 Z" fill="#5a5a5a"/></svg>
<div class="b" style="left:455px;top:285px;width:72px;height:16px;background:#5f5f5f;"></div>
<div class="b" style="left:526px;top:285px;width:1px;height:16px;background:#a8a8a8;"></div>
<div class="t" style="left:486.33px;top:285.30px;font-size:14.00px;line-height:16px;color:#e2e2e2;">A</div>
<div class="b" style="left:455px;top:286px;width:1px;height:15px;background:#4d4d4d;"></div>
<div class="t" style="left:583.83px;top:285.30px;font-size:14.00px;line-height:16px;color:#e2e2e2;">B</div>
<div class="b" style="left:527px;top:286px;width:1px;height:15px;background:#4d4d4d;"></div>
<div class="t" style="left:704.44px;top:285.30px;font-size:14.00px;line-height:16px;color:#e2e2e2;">C</div>
<div class="b" style="left:650px;top:286px;width:1px;height:15px;background:#4d4d4d;"></div>
<div class="t" style="left:833.44px;top:285.30px;font-size:14.00px;line-height:16px;color:#e2e2e2;">D</div>
<div class="b" style="left:769px;top:286px;width:1px;height:15px;background:#4d4d4d;"></div>
<div class="t" style="left:949.83px;top:285.30px;font-size:14.00px;line-height:16px;color:#e2e2e2;">E</div>
<div class="b" style="left:908px;top:286px;width:1px;height:15px;background:#4d4d4d;"></div>
<div class="t" style="left:1038.72px;top:285.30px;font-size:14.00px;line-height:16px;color:#e2e2e2;">F</div>
<div class="b" style="left:1001px;top:286px;width:1px;height:15px;background:#4d4d4d;"></div>
<div class="t" style="left:1119.06px;top:285.30px;font-size:14.00px;line-height:16px;color:#e2e2e2;">G</div>
<div class="b" style="left:1085px;top:286px;width:1px;height:15px;background:#4d4d4d;"></div>
<div class="t" style="left:1201.44px;top:285.30px;font-size:14.00px;line-height:16px;color:#e2e2e2;">H</div>
<div class="b" style="left:1164px;top:286px;width:1px;height:15px;background:#4d4d4d;"></div>
<div class="t" style="left:1287.06px;top:285.30px;font-size:14.00px;line-height:16px;color:#e2e2e2;">I</div>
<div class="b" style="left:1249px;top:286px;width:1px;height:15px;background:#4d4d4d;"></div>
<div class="t" style="left:1376.00px;top:285.30px;font-size:14.00px;line-height:16px;color:#e2e2e2;">J</div>
<div class="b" style="left:1329px;top:286px;width:1px;height:15px;background:#4d4d4d;"></div>
<div class="b" style="left:430px;top:301px;width:25px;height:348px;background:#262626;"></div>
<div class="b" style="left:430px;top:301px;width:25px;height:23px;background:#5f5f5f;"></div>
<div class="b" style="left:430px;top:323px;width:25px;height:1px;background:#8a8a8a;"></div>
<div class="t" style="left:438.61px;top:307.10px;font-size:14.00px;line-height:16px;color:#e2e2e2;">1</div>
<div class="b" style="left:430px;top:340px;width:25px;height:1px;background:#4d4d4d;"></div>
<div class="t" style="left:438.61px;top:324.10px;font-size:14.00px;line-height:16px;color:#e2e2e2;">2</div>
<div class="b" style="left:430px;top:357px;width:25px;height:1px;background:#4d4d4d;"></div>
<div class="t" style="left:438.61px;top:341.10px;font-size:14.00px;line-height:16px;color:#e2e2e2;">3</div>
<div class="b" style="left:430px;top:374px;width:25px;height:1px;background:#4d4d4d;"></div>
<div class="t" style="left:438.61px;top:358.10px;font-size:14.00px;line-height:16px;color:#e2e2e2;">4</div>
<div class="b" style="left:430px;top:391px;width:25px;height:1px;background:#4d4d4d;"></div>
<div class="t" style="left:438.61px;top:375.10px;font-size:14.00px;line-height:16px;color:#e2e2e2;">5</div>
<div class="b" style="left:430px;top:408px;width:25px;height:1px;background:#4d4d4d;"></div>
<div class="t" style="left:438.61px;top:392.10px;font-size:14.00px;line-height:16px;color:#e2e2e2;">6</div>
<div class="b" style="left:430px;top:425px;width:25px;height:1px;background:#4d4d4d;"></div>
<div class="t" style="left:438.61px;top:409.10px;font-size:14.00px;line-height:16px;color:#e2e2e2;">7</div>
<div class="b" style="left:430px;top:442px;width:25px;height:1px;background:#4d4d4d;"></div>
<div class="t" style="left:438.61px;top:426.10px;font-size:14.00px;line-height:16px;color:#e2e2e2;">8</div>
<div class="b" style="left:430px;top:459px;width:25px;height:1px;background:#4d4d4d;"></div>
<div class="t" style="left:438.61px;top:443.10px;font-size:14.00px;line-height:16px;color:#e2e2e2;">9</div>
<div class="b" style="left:430px;top:476px;width:25px;height:1px;background:#4d4d4d;"></div>
<div class="t" style="left:434.71px;top:460.10px;font-size:14.00px;line-height:16px;color:#e2e2e2;">10</div>
<div class="b" style="left:430px;top:493px;width:25px;height:1px;background:#4d4d4d;"></div>
<div class="t" style="left:435.23px;top:477.10px;font-size:14.00px;line-height:16px;color:#e2e2e2;">11</div>
<div class="b" style="left:430px;top:510px;width:25px;height:1px;background:#4d4d4d;"></div>
<div class="t" style="left:434.71px;top:494.10px;font-size:14.00px;line-height:16px;color:#e2e2e2;">12</div>
<div class="b" style="left:430px;top:527px;width:25px;height:1px;background:#4d4d4d;"></div>
<div class="t" style="left:434.71px;top:511.10px;font-size:14.00px;line-height:16px;color:#e2e2e2;">13</div>
<div class="b" style="left:430px;top:544px;width:25px;height:1px;background:#4d4d4d;"></div>
<div class="t" style="left:434.71px;top:528.10px;font-size:14.00px;line-height:16px;color:#e2e2e2;">14</div>
<div class="b" style="left:430px;top:561px;width:25px;height:1px;background:#4d4d4d;"></div>
<div class="t" style="left:434.71px;top:545.10px;font-size:14.00px;line-height:16px;color:#e2e2e2;">15</div>
<div class="b" style="left:430px;top:578px;width:25px;height:1px;background:#4d4d4d;"></div>
<div class="t" style="left:434.71px;top:562.10px;font-size:14.00px;line-height:16px;color:#e2e2e2;">16</div>
<div class="b" style="left:430px;top:595px;width:25px;height:1px;background:#4d4d4d;"></div>
<div class="t" style="left:434.71px;top:579.10px;font-size:14.00px;line-height:16px;color:#e2e2e2;">17</div>
<div class="b" style="left:430px;top:612px;width:25px;height:1px;background:#4d4d4d;"></div>
<div class="t" style="left:434.71px;top:596.10px;font-size:14.00px;line-height:16px;color:#e2e2e2;">18</div>
<div class="b" style="left:430px;top:629px;width:25px;height:1px;background:#4d4d4d;"></div>
<div class="t" style="left:434.71px;top:613.10px;font-size:14.00px;line-height:16px;color:#e2e2e2;">19</div>
<div class="b" style="left:430px;top:646px;width:25px;height:1px;background:#4d4d4d;"></div>
<div class="t" style="left:434.71px;top:630.10px;font-size:14.00px;line-height:16px;color:#e2e2e2;">20</div>
<div class="b" style="left:430px;top:300px;width:25px;height:1px;background:#8a8a8a;"></div>
<div class="t" style="left:460.67px;top:302.20px;font-size:14.00px;line-height:16px;color:#000;font-weight:700;transform:scaleX(0.935);transform-origin:50% 50%;">FIRSTNU</div>
<div class="t" style="left:533.66px;top:302.20px;font-size:14.00px;line-height:16px;color:#000;font-weight:700;transform:scaleX(0.935);transform-origin:50% 50%;">FIRSTNU_NAME</div>
<div class="t" style="left:656.99px;top:302.20px;font-size:14.00px;line-height:16px;color:#000;font-weight:700;transform:scaleX(0.935);transform-origin:50% 50%;">FIRSTNU_TYPE</div>
<div class="t" style="left:777.31px;top:302.20px;font-size:14.00px;line-height:16px;color:#000;font-weight:700;transform:scaleX(0.935);transform-origin:50% 50%;">FIRSTNU_STATUS</div>
<div class="t" style="left:914.42px;top:302.20px;font-size:14.00px;line-height:16px;color:#000;font-weight:700;transform:scaleX(0.9);transform-origin:50% 50%;">March_2021</div>
<div class="t" style="left:1007.59px;top:302.20px;font-size:14.00px;line-height:16px;color:#000;font-weight:700;transform:scaleX(0.9);transform-origin:50% 50%;">April_2021</div>
<div class="t" style="left:1091.42px;top:302.20px;font-size:14.00px;line-height:16px;color:#000;font-weight:700;transform:scaleX(0.9);transform-origin:50% 50%;">May_2021</div>
<div class="t" style="left:1170.70px;top:302.20px;font-size:14.00px;line-height:16px;color:#000;font-weight:700;transform:scaleX(0.9);transform-origin:50% 50%;">June_2021</div>
<div class="t" style="left:1255.53px;top:302.20px;font-size:14.00px;line-height:16px;color:#000;font-weight:700;transform:scaleX(0.9);transform-origin:50% 50%;">July_2021</div>
<div class="t" style="left:1335.93px;top:302.20px;font-size:14.00px;line-height:16px;color:#000;font-weight:700;transform:scaleX(0.9);transform-origin:50% 50%;">August_2021</div>
<div class="t" style="left:467.08px;top:325.70px;font-size:10.00px;line-height:12px;color:#000;letter-spacing:0.42px;">1,000,003</div>
<div class="t" style="left:552.66px;top:325.70px;font-size:10.00px;line-height:12px;color:#000;">MANAGEMENT</div>
<div class="t" style="left:670.97px;top:325.70px;font-size:10.00px;line-height:12px;color:#000;">RECREATIONAL</div>
<div class="t" style="left:819.05px;top:325.70px;font-size:10.00px;line-height:12px;color:#000;">DELETE</div>
<div class="t" style="left:941.15px;top:325.70px;font-size:10.00px;line-height:12px;color:#000;letter-spacing:0.42px;">5,130</div>
<div class="t" style="left:1029.65px;top:325.70px;font-size:10.00px;line-height:12px;color:#000;letter-spacing:0.42px;">5,172</div>
<div class="t" style="left:1111.15px;top:325.70px;font-size:10.00px;line-height:12px;color:#000;letter-spacing:0.42px;">5,168</div>
<div class="t" style="left:1193.15px;top:325.70px;font-size:10.00px;line-height:12px;color:#000;letter-spacing:0.42px;">5,162</div>
<div class="t" style="left:1275.65px;top:325.70px;font-size:10.00px;line-height:12px;color:#000;letter-spacing:0.42px;">5,207</div>
<div class="t" style="left:1366.15px;top:325.70px;font-size:10.00px;line-height:12px;color:#000;letter-spacing:0.42px;">5,260</div>
<div class="t" style="left:467.08px;top:342.70px;font-size:10.00px;line-height:12px;color:#000;letter-spacing:0.42px;">1,000,004</div>
<div class="t" style="left:561.08px;top:342.70px;font-size:10.00px;line-height:12px;color:#000;">PROPERTY</div>
<div class="t" style="left:670.97px;top:342.70px;font-size:10.00px;line-height:12px;color:#000;">RECREATIONAL</div>
<div class="t" style="left:817.11px;top:342.70px;font-size:10.00px;line-height:12px;color:#000;">NORMAL</div>
<div class="t" style="left:941.15px;top:342.70px;font-size:10.00px;line-height:12px;color:#000;letter-spacing:0.42px;">1,052</div>
<div class="t" style="left:1029.65px;top:342.70px;font-size:10.00px;line-height:12px;color:#000;letter-spacing:0.42px;">1,058</div>
<div class="t" style="left:1111.15px;top:342.70px;font-size:10.00px;line-height:12px;color:#000;letter-spacing:0.42px;">1,064</div>
<div class="t" style="left:1193.15px;top:342.70px;font-size:10.00px;line-height:12px;color:#000;letter-spacing:0.42px;">1,062</div>
<div class="t" style="left:1275.65px;top:342.70px;font-size:10.00px;line-height:12px;color:#000;letter-spacing:0.42px;">1,076</div>
<div class="t" style="left:1366.15px;top:342.70px;font-size:10.00px;line-height:12px;color:#000;letter-spacing:0.42px;">1,090</div>
<div class="t" style="left:467.08px;top:359.70px;font-size:10.00px;line-height:12px;color:#000;letter-spacing:0.42px;">1,000,005</div>
<div class="t" style="left:553.21px;top:359.70px;font-size:10.00px;line-height:12px;color:#000;">ENTERPRISES</div>
<div class="t" style="left:670.97px;top:359.70px;font-size:10.00px;line-height:12px;color:#000;">RECREATIONAL</div>
<div class="t" style="left:814.70px;top:359.70px;font-size:10.00px;line-height:12px;color:#000;">AVERAGE</div>
<div class="t" style="left:941.15px;top:359.70px;font-size:10.00px;line-height:12px;color:#000;letter-spacing:0.42px;">1,014</div>
<div class="t" style="left:1029.65px;top:359.70px;font-size:10.00px;line-height:12px;color:#000;letter-spacing:0.42px;">1,036</div>
<div class="t" style="left:1111.15px;top:359.70px;font-size:10.00px;line-height:12px;color:#000;letter-spacing:0.42px;">1,049</div>
<div class="t" style="left:1193.15px;top:359.70px;font-size:10.00px;line-height:12px;color:#000;letter-spacing:0.42px;">1,049</div>
<div class="t" style="left:1275.65px;top:359.70px;font-size:10.00px;line-height:12px;color:#000;letter-spacing:0.42px;">1,062</div>
<div class="t" style="left:1366.15px;top:359.70px;font-size:10.00px;line-height:12px;color:#000;letter-spacing:0.42px;">1,078</div>
<div class="t" style="left:467.08px;top:376.70px;font-size:10.00px;line-height:12px;color:#000;letter-spacing:0.42px;">1,000,006</div>
<div class="t" style="left:552.66px;top:376.70px;font-size:10.00px;line-height:12px;color:#000;">MANAGEMENT</div>
<div class="t" style="left:670.97px;top:376.70px;font-size:10.00px;line-height:12px;color:#000;">RECREATIONAL</div>
<div class="t" style="left:819.05px;top:376.70px;font-size:10.00px;line-height:12px;color:#000;">DELETE</div>
<div class="t" style="left:951.72px;top:376.70px;font-size:10.00px;line-height:12px;color:#000;letter-spacing:0.42px;">0</div>
<div class="t" style="left:1034.24px;top:376.70px;font-size:10.00px;line-height:12px;color:#000;letter-spacing:0.42px;">427</div>
<div class="t" style="left:1115.74px;top:376.70px;font-size:10.00px;line-height:12px;color:#000;letter-spacing:0.42px;">436</div>
<div class="t" style="left:1197.74px;top:376.70px;font-size:10.00px;line-height:12px;color:#000;letter-spacing:0.42px;">436</div>
<div class="t" style="left:1280.24px;top:376.70px;font-size:10.00px;line-height:12px;color:#000;letter-spacing:0.42px;">449</div>
<div class="t" style="left:1370.74px;top:376.70px;font-size:10.00px;line-height:12px;color:#000;letter-spacing:0.42px;">470</div>
<div class="t" style="left:467.08px;top:393.70px;font-size:10.00px;line-height:12px;color:#000;letter-spacing:0.42px;">1,000,007</div>
<div class="t" style="left:561.08px;top:393.70px;font-size:10.00px;line-height:12px;color:#000;">PROPERTY</div>
<div class="t" style="left:670.97px;top:393.70px;font-size:10.00px;line-height:12px;color:#000;">RECREATIONAL</div>
<div class="t" style="left:817.11px;top:393.70px;font-size:10.00px;line-height:12px;color:#000;">NORMAL</div>
<div class="t" style="left:948.73px;top:393.70px;font-size:10.00px;line-height:12px;color:#000;letter-spacing:0.42px;">64</div>
<div class="t" style="left:1037.23px;top:393.70px;font-size:10.00px;line-height:12px;color:#000;letter-spacing:0.42px;">64</div>
<div class="t" style="left:1118.73px;top:393.70px;font-size:10.00px;line-height:12px;color:#000;letter-spacing:0.42px;">64</div>
<div class="t" style="left:1200.73px;top:393.70px;font-size:10.00px;line-height:12px;color:#000;letter-spacing:0.42px;">64</div>
<div class="t" style="left:1283.23px;top:393.70px;font-size:10.00px;line-height:12px;color:#000;letter-spacing:0.42px;">64</div>
<div class="t" style="left:1373.73px;top:393.70px;font-size:10.00px;line-height:12px;color:#000;letter-spacing:0.42px;">64</div>
<div class="t" style="left:467.08px;top:410.70px;font-size:10.00px;line-height:12px;color:#000;letter-spacing:0.42px;">1,000,008</div>
<div class="t" style="left:553.21px;top:410.70px;font-size:10.00px;line-height:12px;color:#000;">ENTERPRISES</div>
<div class="t" style="left:670.97px;top:410.70px;font-size:10.00px;line-height:12px;color:#000;">RECREATIONAL</div>
<div class="t" style="left:814.70px;top:410.70px;font-size:10.00px;line-height:12px;color:#000;">AVERAGE</div>
<div class="t" style="left:945.74px;top:410.70px;font-size:10.00px;line-height:12px;color:#000;letter-spacing:0.42px;">156</div>
<div class="t" style="left:1034.24px;top:410.70px;font-size:10.00px;line-height:12px;color:#000;letter-spacing:0.42px;">156</div>
<div class="t" style="left:1115.74px;top:410.70px;font-size:10.00px;line-height:12px;color:#000;letter-spacing:0.42px;">156</div>
<div class="t" style="left:1197.74px;top:410.70px;font-size:10.00px;line-height:12px;color:#000;letter-spacing:0.42px;">156</div>
<div class="t" style="left:1280.24px;top:410.70px;font-size:10.00px;line-height:12px;color:#000;letter-spacing:0.42px;">156</div>
<div class="t" style="left:1370.74px;top:410.70px;font-size:10.00px;line-height:12px;color:#000;letter-spacing:0.42px;">155</div>
<div class="t" style="left:467.08px;top:427.70px;font-size:10.00px;line-height:12px;color:#000;letter-spacing:0.42px;">1,000,009</div>
<div class="t" style="left:552.66px;top:427.70px;font-size:10.00px;line-height:12px;color:#000;">MANAGEMENT</div>
<div class="t" style="left:670.97px;top:427.70px;font-size:10.00px;line-height:12px;color:#000;">RECREATIONAL</div>
<div class="t" style="left:819.05px;top:427.70px;font-size:10.00px;line-height:12px;color:#000;">DELETE</div>
<div class="t" style="left:948.73px;top:427.70px;font-size:10.00px;line-height:12px;color:#000;letter-spacing:0.42px;">18</div>
<div class="t" style="left:1037.23px;top:427.70px;font-size:10.00px;line-height:12px;color:#000;letter-spacing:0.42px;">18</div>
<div class="t" style="left:1118.73px;top:427.70px;font-size:10.00px;line-height:12px;color:#000;letter-spacing:0.42px;">18</div>
<div class="t" style="left:1200.73px;top:427.70px;font-size:10.00px;line-height:12px;color:#000;letter-spacing:0.42px;">18</div>
<div class="t" style="left:1283.23px;top:427.70px;font-size:10.00px;line-height:12px;color:#000;letter-spacing:0.42px;">18</div>
<div class="t" style="left:1373.73px;top:427.70px;font-size:10.00px;line-height:12px;color:#000;letter-spacing:0.42px;">18</div>
<div class="t" style="left:467.08px;top:444.70px;font-size:10.00px;line-height:12px;color:#000;letter-spacing:0.42px;">1,000,010</div>
<div class="t" style="left:561.08px;top:444.70px;font-size:10.00px;line-height:12px;color:#000;">PROPERTY</div>
<div class="t" style="left:670.97px;top:444.70px;font-size:10.00px;line-height:12px;color:#000;">RECREATIONAL</div>
<div class="t" style="left:817.11px;top:444.70px;font-size:10.00px;line-height:12px;color:#000;">NORMAL</div>
<div class="t" style="left:948.73px;top:444.70px;font-size:10.00px;line-height:12px;color:#000;letter-spacing:0.42px;">53</div>
<div class="t" style="left:1037.23px;top:444.70px;font-size:10.00px;line-height:12px;color:#000;letter-spacing:0.42px;">53</div>
<div class="t" style="left:1118.73px;top:444.70px;font-size:10.00px;line-height:12px;color:#000;letter-spacing:0.42px;">53</div>
<div class="t" style="left:1200.73px;top:444.70px;font-size:10.00px;line-height:12px;color:#000;letter-spacing:0.42px;">53</div>
<div class="t" style="left:1283.23px;top:444.70px;font-size:10.00px;line-height:12px;color:#000;letter-spacing:0.42px;">53</div>
<div class="t" style="left:1373.73px;top:444.70px;font-size:10.00px;line-height:12px;color:#000;letter-spacing:0.42px;">53</div>
<div class="t" style="left:467.45px;top:461.70px;font-size:10.00px;line-height:12px;color:#000;letter-spacing:0.42px;">1,000,011</div>
<div class="t" style="left:553.21px;top:461.70px;font-size:10.00px;line-height:12px;color:#000;">ENTERPRISES</div>
<div class="t" style="left:670.97px;top:461.70px;font-size:10.00px;line-height:12px;color:#000;">RECREATIONAL</div>
<div class="t" style="left:814.70px;top:461.70px;font-size:10.00px;line-height:12px;color:#000;">AVERAGE</div>
<div class="t" style="left:945.74px;top:461.70px;font-size:10.00px;line-height:12px;color:#000;letter-spacing:0.42px;">191</div>
<div class="t" style="left:1034.24px;top:461.70px;font-size:10.00px;line-height:12px;color:#000;letter-spacing:0.42px;">191</div>
<div class="t" style="left:1115.74px;top:461.70px;font-size:10.00px;line-height:12px;color:#000;letter-spacing:0.42px;">191</div>
<div class="t" style="left:1197.74px;top:461.70px;font-size:10.00px;line-height:12px;color:#000;letter-spacing:0.42px;">191</div>
<div class="t" style="left:1280.24px;top:461.70px;font-size:10.00px;line-height:12px;color:#000;letter-spacing:0.42px;">191</div>
<div class="t" style="left:1370.74px;top:461.70px;font-size:10.00px;line-height:12px;color:#000;letter-spacing:0.42px;">191</div>
<div class="t" style="left:467.08px;top:478.70px;font-size:10.00px;line-height:12px;color:#000;letter-spacing:0.42px;">1,000,012</div>
<div class="t" style="left:552.66px;top:478.70px;font-size:10.00px;line-height:12px;color:#000;">MANAGEMENT</div>
<div class="t" style="left:670.97px;top:478.70px;font-size:10.00px;line-height:12px;color:#000;">RECREATIONAL</div>
<div class="t" style="left:819.05px;top:478.70px;font-size:10.00px;line-height:12px;color:#000;">DELETE</div>
<div class="t" style="left:948.73px;top:478.70px;font-size:10.00px;line-height:12px;color:#000;letter-spacing:0.42px;">56</div>
<div class="t" style="left:1037.23px;top:478.70px;font-size:10.00px;line-height:12px;color:#000;letter-spacing:0.42px;">56</div>
<div class="t" style="left:1118.73px;top:478.70px;font-size:10.00px;line-height:12px;color:#000;letter-spacing:0.42px;">56</div>
<div class="t" style="left:1200.73px;top:478.70px;font-size:10.00px;line-height:12px;color:#000;letter-spacing:0.42px;">56</div>
<div class="t" style="left:1283.23px;top:478.70px;font-size:10.00px;line-height:12px;color:#000;letter-spacing:0.42px;">56</div>
<div class="t" style="left:1373.73px;top:478.70px;font-size:10.00px;line-height:12px;color:#000;letter-spacing:0.42px;">56</div>
<div class="t" style="left:467.08px;top:495.70px;font-size:10.00px;line-height:12px;color:#000;letter-spacing:0.42px;">1,000,013</div>
<div class="t" style="left:561.08px;top:495.70px;font-size:10.00px;line-height:12px;color:#000;">PROPERTY</div>
<div class="t" style="left:670.97px;top:495.70px;font-size:10.00px;line-height:12px;color:#000;">RECREATIONAL</div>
<div class="t" style="left:817.11px;top:495.70px;font-size:10.00px;line-height:12px;color:#000;">NORMAL</div>
<div class="t" style="left:945.74px;top:495.70px;font-size:10.00px;line-height:12px;color:#000;letter-spacing:0.42px;">842</div>
<div class="t" style="left:1034.24px;top:495.70px;font-size:10.00px;line-height:12px;color:#000;letter-spacing:0.42px;">840</div>
<div class="t" style="left:1115.74px;top:495.70px;font-size:10.00px;line-height:12px;color:#000;letter-spacing:0.42px;">839</div>
<div class="t" style="left:1197.74px;top:495.70px;font-size:10.00px;line-height:12px;color:#000;letter-spacing:0.42px;">838</div>
<div class="t" style="left:1280.24px;top:495.70px;font-size:10.00px;line-height:12px;color:#000;letter-spacing:0.42px;">827</div>
<div class="t" style="left:1370.74px;top:495.70px;font-size:10.00px;line-height:12px;color:#000;letter-spacing:0.42px;">821</div>
<div class="t" style="left:467.08px;top:512.70px;font-size:10.00px;line-height:12px;color:#000;letter-spacing:0.42px;">1,000,014</div>
<div class="t" style="left:553.21px;top:512.70px;font-size:10.00px;line-height:12px;color:#000;">ENTERPRISES</div>
<div class="t" style="left:670.97px;top:512.70px;font-size:10.00px;line-height:12px;color:#000;">RECREATIONAL</div>
<div class="t" style="left:814.70px;top:512.70px;font-size:10.00px;line-height:12px;color:#000;">AVERAGE</div>
<div class="t" style="left:945.74px;top:512.70px;font-size:10.00px;line-height:12px;color:#000;letter-spacing:0.42px;">220</div>
<div class="t" style="left:1034.24px;top:512.70px;font-size:10.00px;line-height:12px;color:#000;letter-spacing:0.42px;">220</div>
<div class="t" style="left:1115.74px;top:512.70px;font-size:10.00px;line-height:12px;color:#000;letter-spacing:0.42px;">220</div>
<div class="t" style="left:1197.74px;top:512.70px;font-size:10.00px;line-height:12px;color:#000;letter-spacing:0.42px;">220</div>
<div class="t" style="left:1280.24px;top:512.70px;font-size:10.00px;line-height:12px;color:#000;letter-spacing:0.42px;">219</div>
<div class="t" style="left:1370.74px;top:512.70px;font-size:10.00px;line-height:12px;color:#000;letter-spacing:0.42px;">219</div>
<div class="t" style="left:467.08px;top:529.70px;font-size:10.00px;line-height:12px;color:#000;letter-spacing:0.42px;">1,000,015</div>
<div class="t" style="left:552.66px;top:529.70px;font-size:10.00px;line-height:12px;color:#000;">MANAGEMENT</div>
<div class="t" style="left:670.97px;top:529.70px;font-size:10.00px;line-height:12px;color:#000;">RECREATIONAL</div>
<div class="t" style="left:819.05px;top:529.70px;font-size:10.00px;line-height:12px;color:#000;">DELETE</div>
<div class="t" style="left:945.74px;top:529.70px;font-size:10.00px;line-height:12px;color:#000;letter-spacing:0.42px;">132</div>
<div class="t" style="left:1034.24px;top:529.70px;font-size:10.00px;line-height:12px;color:#000;letter-spacing:0.42px;">133</div>
<div class="t" style="left:1115.74px;top:529.70px;font-size:10.00px;line-height:12px;color:#000;letter-spacing:0.42px;">133</div>
<div class="t" style="left:1197.74px;top:529.70px;font-size:10.00px;line-height:12px;color:#000;letter-spacing:0.42px;">132</div>
<div class="t" style="left:1280.24px;top:529.70px;font-size:10.00px;line-height:12px;color:#000;letter-spacing:0.42px;">133</div>
<div class="t" style="left:1370.74px;top:529.70px;font-size:10.00px;line-height:12px;color:#000;letter-spacing:0.42px;">132</div>
<div class="t" style="left:467.08px;top:546.70px;font-size:10.00px;line-height:12px;color:#000;letter-spacing:0.42px;">1,000,016</div>
<div class="t" style="left:561.08px;top:546.70px;font-size:10.00px;line-height:12px;color:#000;">PROPERTY</div>
<div class="t" style="left:670.97px;top:546.70px;font-size:10.00px;line-height:12px;color:#000;">RECREATIONAL</div>
<div class="t" style="left:817.11px;top:546.70px;font-size:10.00px;line-height:12px;color:#000;">NORMAL</div>
<div class="t" style="left:941.15px;top:546.70px;font-size:10.00px;line-height:12px;color:#000;letter-spacing:0.42px;">1,381</div>
<div class="t" style="left:1029.65px;top:546.70px;font-size:10.00px;line-height:12px;color:#000;letter-spacing:0.42px;">1,422</div>
<div class="t" style="left:1111.15px;top:546.70px;font-size:10.00px;line-height:12px;color:#000;letter-spacing:0.42px;">1,449</div>
<div class="t" style="left:1193.15px;top:546.70px;font-size:10.00px;line-height:12px;color:#000;letter-spacing:0.42px;">1,449</div>
<div class="t" style="left:1275.65px;top:546.70px;font-size:10.00px;line-height:12px;color:#000;letter-spacing:0.42px;">1,484</div>
<div class="t" style="left:1366.15px;top:546.70px;font-size:10.00px;line-height:12px;color:#000;letter-spacing:0.42px;">1,517</div>
<div class="t" style="left:467.08px;top:563.70px;font-size:10.00px;line-height:12px;color:#000;letter-spacing:0.42px;">1,000,017</div>
<div class="t" style="left:553.21px;top:563.70px;font-size:10.00px;line-height:12px;color:#000;">ENTERPRISES</div>
<div class="t" style="left:670.97px;top:563.70px;font-size:10.00px;line-height:12px;color:#000;">RECREATIONAL</div>
<div class="t" style="left:814.70px;top:563.70px;font-size:10.00px;line-height:12px;color:#000;">AVERAGE</div>
<div class="t" style="left:948.73px;top:563.70px;font-size:10.00px;line-height:12px;color:#000;letter-spacing:0.42px;">25</div>
<div class="t" style="left:1037.23px;top:563.70px;font-size:10.00px;line-height:12px;color:#000;letter-spacing:0.42px;">25</div>
<div class="t" style="left:1118.73px;top:563.70px;font-size:10.00px;line-height:12px;color:#000;letter-spacing:0.42px;">25</div>
<div class="t" style="left:1200.73px;top:563.70px;font-size:10.00px;line-height:12px;color:#000;letter-spacing:0.42px;">24</div>
<div class="t" style="left:1283.23px;top:563.70px;font-size:10.00px;line-height:12px;color:#000;letter-spacing:0.42px;">24</div>
<div class="t" style="left:1373.73px;top:563.70px;font-size:10.00px;line-height:12px;color:#000;letter-spacing:0.42px;">24</div>
<div class="t" style="left:467.08px;top:580.70px;font-size:10.00px;line-height:12px;color:#000;letter-spacing:0.42px;">1,000,018</div>
<div class="t" style="left:552.66px;top:580.70px;font-size:10.00px;line-height:12px;color:#000;">MANAGEMENT</div>
<div class="t" style="left:670.97px;top:580.70px;font-size:10.00px;line-height:12px;color:#000;">RECREATIONAL</div>
<div class="t" style="left:819.05px;top:580.70px;font-size:10.00px;line-height:12px;color:#000;">DELETE</div>
<div class="t" style="left:945.74px;top:580.70px;font-size:10.00px;line-height:12px;color:#000;letter-spacing:0.42px;">408</div>
<div class="t" style="left:1034.24px;top:580.70px;font-size:10.00px;line-height:12px;color:#000;letter-spacing:0.42px;">416</div>
<div class="t" style="left:1115.74px;top:580.70px;font-size:10.00px;line-height:12px;color:#000;letter-spacing:0.42px;">423</div>
<div class="t" style="left:1197.74px;top:580.70px;font-size:10.00px;line-height:12px;color:#000;letter-spacing:0.42px;">423</div>
<div class="t" style="left:1280.24px;top:580.70px;font-size:10.00px;line-height:12px;color:#000;letter-spacing:0.42px;">435</div>
<div class="t" style="left:1370.74px;top:580.70px;font-size:10.00px;line-height:12px;color:#000;letter-spacing:0.42px;">441</div>
<div class="t" style="left:467.08px;top:597.70px;font-size:10.00px;line-height:12px;color:#000;letter-spacing:0.42px;">1,000,019</div>
<div class="t" style="left:561.08px;top:597.70px;font-size:10.00px;line-height:12px;color:#000;">PROPERTY</div>
<div class="t" style="left:670.97px;top:597.70px;font-size:10.00px;line-height:12px;color:#000;">RECREATIONAL</div>
<div class="t" style="left:817.11px;top:597.70px;font-size:10.00px;line-height:12px;color:#000;">NORMAL</div>
<div class="t" style="left:945.74px;top:597.70px;font-size:10.00px;line-height:12px;color:#000;letter-spacing:0.42px;">424</div>
<div class="t" style="left:1034.24px;top:597.70px;font-size:10.00px;line-height:12px;color:#000;letter-spacing:0.42px;">434</div>
<div class="t" style="left:1115.74px;top:597.70px;font-size:10.00px;line-height:12px;color:#000;letter-spacing:0.42px;">440</div>
<div class="t" style="left:1197.74px;top:597.70px;font-size:10.00px;line-height:12px;color:#000;letter-spacing:0.42px;">440</div>
<div class="t" style="left:1280.24px;top:597.70px;font-size:10.00px;line-height:12px;color:#000;letter-spacing:0.42px;">455</div>
<div class="t" style="left:1370.74px;top:597.70px;font-size:10.00px;line-height:12px;color:#000;letter-spacing:0.42px;">463</div>
<div class="t" style="left:467.08px;top:614.70px;font-size:10.00px;line-height:12px;color:#000;letter-spacing:0.42px;">1,000,020</div>
<div class="t" style="left:553.21px;top:614.70px;font-size:10.00px;line-height:12px;color:#000;">ENTERPRISES</div>
<div class="t" style="left:670.97px;top:614.70px;font-size:10.00px;line-height:12px;color:#000;">RECREATIONAL</div>
<div class="t" style="left:814.70px;top:614.70px;font-size:10.00px;line-height:12px;color:#000;">AVERAGE</div>
<div class="t" style="left:945.74px;top:614.70px;font-size:10.00px;line-height:12px;color:#000;letter-spacing:0.42px;">531</div>
<div class="t" style="left:1034.24px;top:614.70px;font-size:10.00px;line-height:12px;color:#000;letter-spacing:0.42px;">534</div>
<div class="t" style="left:1115.74px;top:614.70px;font-size:10.00px;line-height:12px;color:#000;letter-spacing:0.42px;">539</div>
<div class="t" style="left:1197.74px;top:614.70px;font-size:10.00px;line-height:12px;color:#000;letter-spacing:0.42px;">539</div>
<div class="t" style="left:1280.24px;top:614.70px;font-size:10.00px;line-height:12px;color:#000;letter-spacing:0.42px;">552</div>
<div class="t" style="left:1370.74px;top:614.70px;font-size:10.00px;line-height:12px;color:#000;letter-spacing:0.42px;">554</div>
<div class="t" style="left:467.08px;top:631.70px;font-size:10.00px;line-height:12px;color:#000;letter-spacing:0.42px;">1,000,021</div>
<div class="t" style="left:552.66px;top:631.70px;font-size:10.00px;line-height:12px;color:#000;">MANAGEMENT</div>
<div class="t" style="left:670.97px;top:631.70px;font-size:10.00px;line-height:12px;color:#000;">RECREATIONAL</div>
<div class="t" style="left:819.05px;top:631.70px;font-size:10.00px;line-height:12px;color:#000;">DELETE</div>
<div class="t" style="left:945.74px;top:631.70px;font-size:10.00px;line-height:12px;color:#000;letter-spacing:0.42px;">578</div>
<div class="t" style="left:1034.24px;top:631.70px;font-size:10.00px;line-height:12px;color:#000;letter-spacing:0.42px;">588</div>
<div class="t" style="left:1115.74px;top:631.70px;font-size:10.00px;line-height:12px;color:#000;letter-spacing:0.42px;">592</div>
<div class="t" style="left:1197.74px;top:631.70px;font-size:10.00px;line-height:12px;color:#000;letter-spacing:0.42px;">592</div>
<div class="t" style="left:1280.24px;top:631.70px;font-size:10.00px;line-height:12px;color:#000;letter-spacing:0.42px;">599</div>
<div class="t" style="left:1370.74px;top:631.70px;font-size:10.00px;line-height:12px;color:#000;letter-spacing:0.42px;">606</div>
<div class="b" style="left:454px;top:300px;width:74px;height:25px;border:2px solid #1e7145;background:transparent;"></div>
<div class="b" style="left:523px;top:320px;width:7px;height:7px;background:#1e7145;border:1px solid #fff;"></div>
<!-- annotations -->
<svg class="b" style="left:0;top:0" width="1428" height="649" viewBox="0 0 1428 649"><g fill="none" stroke="#fa0a0a" stroke-width="2" stroke-linecap="round" stroke-linejoin="round"><path d="M327.1 220.3 C322.6 224.4 308.7 237.1 300.0 245.0 C291.3 252.9 283.3 260.4 275.0 267.5 C266.7 274.6 258.3 281.1 250.0 287.5 C241.7 293.9 233.3 299.9 225.0 306.0 C216.7 312.1 207.8 317.8 200.0 324.0 C192.2 330.2 185.3 336.4 178.0 343.0 C170.7 349.6 163.2 356.4 156.2 363.8 C149.2 371.2 139.5 383.6 136.2 387.6"/><path d="M130.5 362.3 L132.5 376 L134.8 388.3 Q160 385.5 188.8 382.6"/><path d="M329.8 356.1 C328.3 357.5 324.4 361.8 320.9 364.3 C317.4 366.8 313.0 369.1 308.6 371.2 C304.2 373.2 299.1 374.7 294.7 376.6 C290.3 378.5 286.2 380.4 282.4 382.7 C278.5 385.0 274.9 388.1 271.6 390.4 C268.3 392.7 266.2 394.5 262.4 396.6 C258.5 398.7 252.6 400.8 248.5 402.8 C244.4 404.9 240.5 406.7 237.7 408.9 C234.9 411.1 233.4 413.2 231.6 415.9 C229.8 418.6 227.6 422.4 226.6 425.1 C225.6 427.8 225.6 430.9 225.4 432.0"/><path d="M224.6 417.1 L225.2 425 L225.4 432.5 Q248.5 430.6 271.9 431.6"/></g></svg>
</body></html>
